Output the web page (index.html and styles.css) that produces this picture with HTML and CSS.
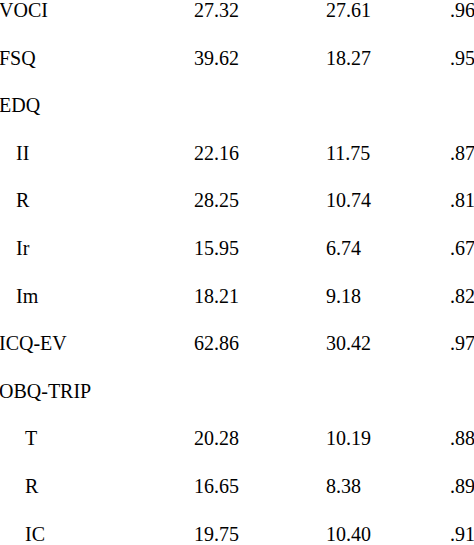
FILE: index.html
```html
<!DOCTYPE html>
<html>
<head>
<meta charset="utf-8">
<link rel="stylesheet" href="styles.css">
</head>
<body>
<div class="table">
  <div class="label">VOCI</div><div>27.32</div><div>27.61</div><div>.96</div>
  <div class="label">FSQ</div><div>39.62</div><div>18.27</div><div>.95</div>
  <div class="label">EDQ</div><div></div><div></div><div></div>
  <div class="label sub">II</div><div>22.16</div><div>11.75</div><div>.87</div>
  <div class="label sub">R</div><div>28.25</div><div>10.74</div><div>.81</div>
  <div class="label sub">Ir</div><div>15.95</div><div>6.74</div><div>.67</div>
  <div class="label sub">Im</div><div>18.21</div><div>9.18</div><div>.82</div>
  <div class="label">ICQ-EV</div><div>62.86</div><div>30.42</div><div>.97</div>
  <div class="label">OBQ-TRIP</div><div></div><div></div><div></div>
  <div class="label sub2">T</div><div>20.28</div><div>10.19</div><div>.88</div>
  <div class="label sub2">R</div><div>16.65</div><div>8.38</div><div>.89</div>
  <div class="label sub2">IC</div><div>19.75</div><div>10.40</div><div>.91</div>
</div>
</body>
</html>
```
FILE: styles.css
```css
html, body {
  margin: 0;
  padding: 0;
  background: #fff;
}
body {
  width: 474px;
  height: 545px;
  overflow: hidden;
  font-family: "Liberation Serif", "Times New Roman", serif;
  font-size: 20px;
  color: #000;
}
.table {
  display: grid;
  grid-template-columns: 195px 132px 124px 1fr;
  grid-auto-rows: 22px;
  row-gap: 25.6px;
  line-height: 22px;
  margin-left: -1px;
  margin-top: -1px;
  white-space: nowrap;
}
.sub {
  padding-left: 17px;
}
.sub2 {
  padding-left: 26px;
}
```
